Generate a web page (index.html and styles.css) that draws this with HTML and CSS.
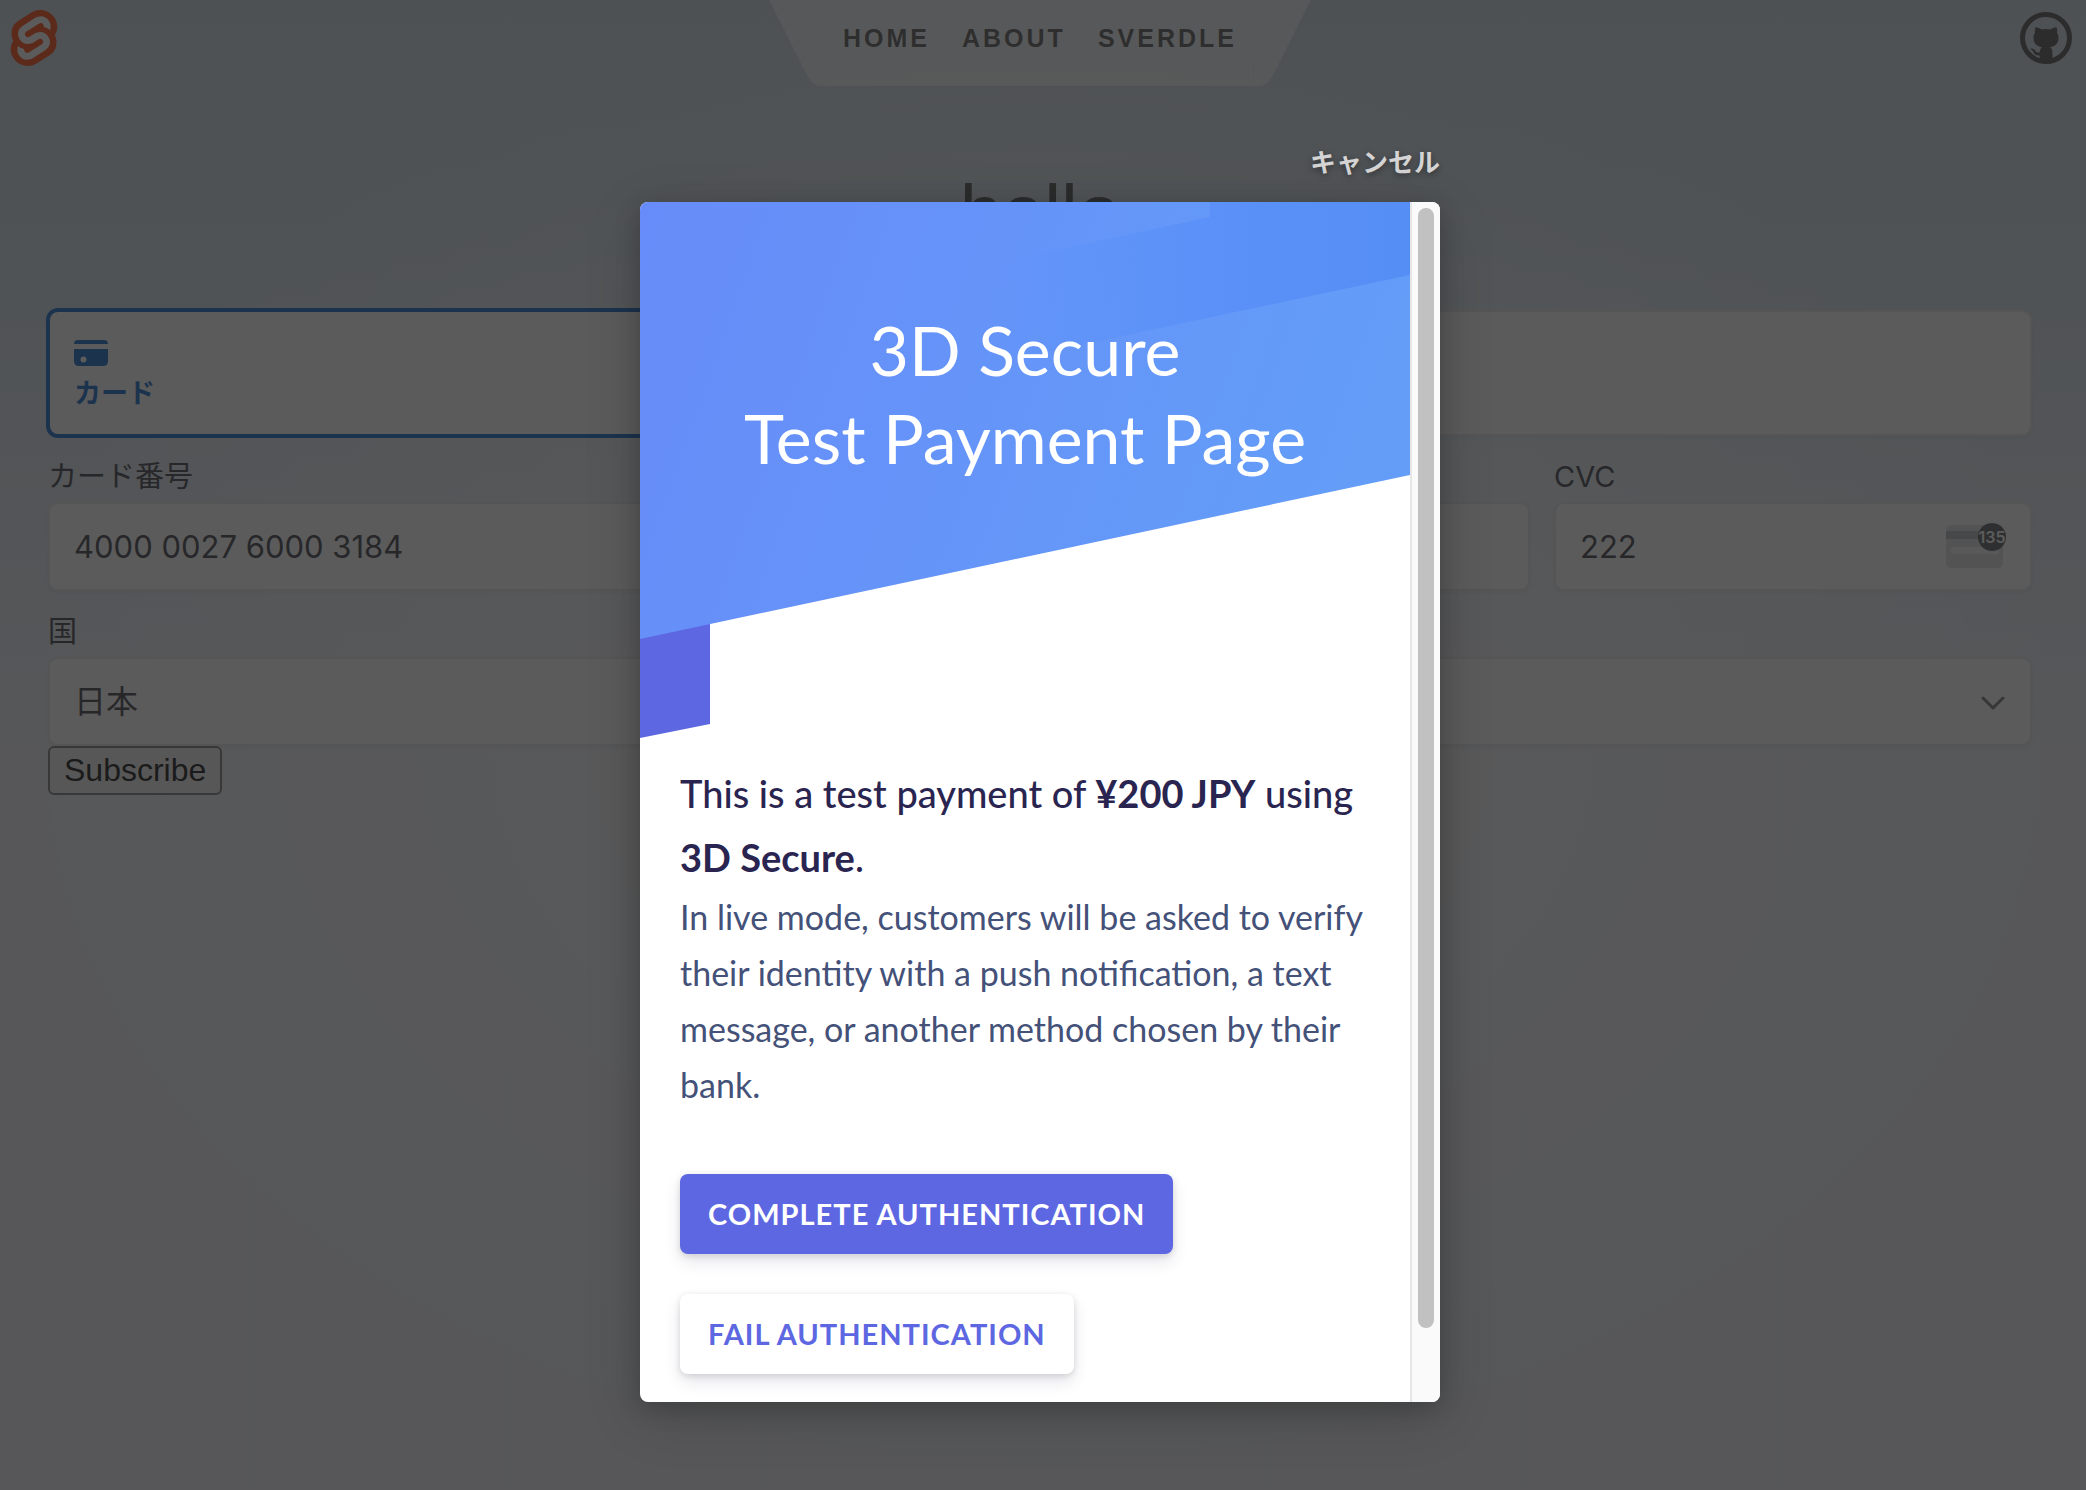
FILE: index.html
```html
<!DOCTYPE html>
<html lang="ja">
<head>
<meta charset="utf-8">
<meta name="viewport" content="width=device-width, initial-scale=1">
<title>hello</title>
<link rel="stylesheet" href="styles.css">
</head>
<body>
<div class="app">
  <header class="header">
    <a class="corner" href="#" aria-label="SvelteKit">
      <svg class="logo" viewBox="0 0 107 128" aria-hidden="true">
        <path fill="#ff3e00" d="M94.1566,22.8189c-10.4-14.8851-30.94-19.2971-45.7914-9.8348L22.2825,29.6078A29.9234,29.9234,0,0,0,8.7639,49.6506a31.5136,31.5136,0,0,0,3.1076,20.2318A30.0061,30.0061,0,0,0,7.3953,81.0653a31.8886,31.8886,0,0,0,5.4473,24.1157c10.4022,14.8865,30.9423,19.2966,45.7914,9.8348L84.7167,98.3921A29.9177,29.9177,0,0,0,98.2353,78.3493,31.5263,31.5263,0,0,0,95.13,58.117a30,30,0,0,0,4.4743-11.1824,31.88,31.88,0,0,0-5.4473-24.1157"/>
        <path fill="#fff" d="M45.8171,106.5815A20.7182,20.7182,0,0,1,23.58,98.3389a19.1739,19.1739,0,0,1-3.2766-14.5025,18.1886,18.1886,0,0,1,.6233-2.4357l.4912-1.4978,1.3363.9815a33.6443,33.6443,0,0,0,10.203,5.0978l.9694.2941-.0893.9675a5.8474,5.8474,0,0,0,1.052,3.8781,6.2389,6.2389,0,0,0,6.6952,2.485,5.7449,5.7449,0,0,0,1.6021-.7041L69.27,76.281a5.4306,5.4306,0,0,0,2.4506-3.631,5.7948,5.7948,0,0,0-.9875-4.3712,6.2436,6.2436,0,0,0-6.6978-2.4864,5.7427,5.7427,0,0,0-1.6.7036l-9.9532,6.3449a19.0329,19.0329,0,0,1-5.2965,2.3259,20.7181,20.7181,0,0,1-22.2368-8.2427,19.1725,19.1725,0,0,1-3.2766-14.5024,17.9885,17.9885,0,0,1,8.13-12.0513L55.8833,23.7472a19.0038,19.0038,0,0,1,5.3-2.3287A20.7182,20.7182,0,0,1,83.42,29.6611a19.1739,19.1739,0,0,1,3.2766,14.5025,18.4,18.4,0,0,1-.6233,2.4357l-.4912,1.4978-1.3356-.98a33.6175,33.6175,0,0,0-10.2037-5.1l-.9694-.2942.0893-.9675a5.8588,5.8588,0,0,0-1.052-3.878,6.2389,6.2389,0,0,0-6.6952-2.485,5.7449,5.7449,0,0,0-1.6021.7041L37.73,51.719a5.4218,5.4218,0,0,0-2.4487,3.63,5.7862,5.7862,0,0,0,.9856,4.3717,6.2437,6.2437,0,0,0,6.6978,2.4864,5.7652,5.7652,0,0,0,1.602-.7041l9.9519-6.3425a18.978,18.978,0,0,1,5.2959-2.3278,20.7181,20.7181,0,0,1,22.2368,8.2427,19.1725,19.1725,0,0,1,3.2766,14.5024,17.9977,17.9977,0,0,1-8.13,12.0532L51.1167,104.2528a19.0038,19.0038,0,0,1-5.3,2.3287"/>
      </svg>
    </a>
    <nav class="nav">
      <svg class="nav-edge" viewBox="0 0 2 3" aria-hidden="true"><path d="M0,0 L1,2 C1.5,3 1.5,3 2,3 L2,0 Z"/></svg>
      <ul class="nav-list">
        <li><a href="#">HOME</a></li>
        <li><a href="#">ABOUT</a></li>
        <li><a href="#">SVERDLE</a></li>
      </ul>
      <svg class="nav-edge" viewBox="0 0 2 3" aria-hidden="true"><path d="M0,0 L0,3 C0.5,3 0.5,3 1,2 L2,0 Z"/></svg>
    </nav>
    <a class="corner corner-right" href="#" aria-label="GitHub">
      <svg class="github" viewBox="0 0 52 52" aria-hidden="true">
        <circle cx="26" cy="26" r="23.5" fill="none" stroke="#444" stroke-width="5"/>
        <path fill="#444" d="M15.4 15.2c2.400 0 4.600 1.200 6.300 2.300 2.800-.7 5.800-.7 8.600 0 1.700-1.100 3.900-2.300 6.300-2.300.8 2 .7 4.100.3 5.400 1.100 1.500 1.600 3.200 1.600 5.200 0 6.200-3.700 8.700-8.300 9.500 1.500 1.200 2.200 2.900 2.200 5.200v8.500c-4.200 1.400-8.600 1.400-12.800 0v-5.600c-5 .6-5.700-2.500-6.700-4.100-.7-1.100-2-1.700-2.500-2.300 1-.9 3.200-.5 4.600 1.300 1.200 1.700 2.200 2.700 4.700 2.100.1-2.200.9-3.900 2.100-5.100-4.600-.8-8.300-3.300-8.300-9.500 0-2 .5-3.700 1.600-5.200-.4-1.300-.5-3.400.3-5.400z"/>
      </svg>
    </a>
  </header>

  <main class="main">
    <h1 class="title">hello</h1>
    <form class="payment">
      <div class="tabs">
        <button class="tab tab-selected" type="button">
          <svg class="tab-icon" viewBox="0 0 34 26" aria-hidden="true">
            <path d="M4 0h26a4 4 0 0 1 4 4H0a4 4 0 0 1 4-4z"/>
            <path fill-rule="evenodd" d="M0 9h34v12.500a4.500 4.500 0 0 1-4.500 4.500h-25A4.500 4.500 0 0 1 0 21.500zM9.500 16.500a3 3 0 1 0 0 6 3 3 0 0 0 0-6z"/>
          </svg>
          <span>カード</span>
        </button>
        <button class="tab" type="button" aria-label="その他"></button>
      </div>
      <div class="fields">
        <div class="field field-wide">
          <label for="number">カード番号</label>
          <input id="number" type="text" value="4000 0027 6000 3184">
        </div>
        <div class="field">
          <input id="expiry" type="text" aria-label="有効期限">
        </div>
        <div class="field">
          <label for="cvc">CVC</label>
          <div class="control">
            <input id="cvc" type="text" value="222">
            <svg class="cvc-icon" viewBox="0 0 60 45" aria-hidden="true">
              <rect x="0" y="2" width="57" height="43" rx="5" fill="#dfe0e1"/>
              <rect x="0" y="8" width="57" height="8" fill="#b0b4b8"/>
              <rect x="5" y="24" width="48" height="7" rx="2" fill="#f8f8f8"/>
              <circle cx="46" cy="14" r="14" fill="#4c5056"/>
              <text x="46" y="20" text-anchor="middle">135</text>
            </svg>
          </div>
        </div>
        <div class="field field-full">
          <label for="country">国</label>
          <div class="control">
            <select id="country"><option>日本</option></select>
            <svg class="chevron" viewBox="0 0 24 14" aria-hidden="true"><path d="M2 2l10 10L22 2"/></svg>
          </div>
        </div>
      </div>
      <button class="subscribe" type="submit">Subscribe</button>
    </form>
  </main>
</div>

<div class="overlay">
  <div class="challenge">
    <button class="cancel" type="button">キャンセル</button>
    <div class="modal" role="dialog" aria-modal="true" aria-labelledby="modal-title">
      <div class="page">
        <div class="hero">
          <svg class="hero-art" viewBox="0 0 770 536" preserveAspectRatio="none" aria-hidden="true">
            <defs>
              <linearGradient id="sky" x1="0" y1="0" x2="1" y2="0.2">
                <stop offset="0" stop-color="#678cf9"/>
                <stop offset="0.5" stop-color="#6594f8"/>
                <stop offset="1" stop-color="#639df8"/>
              </linearGradient>
              <linearGradient id="band" x1="0" y1="0" x2="1" y2="0">
                <stop offset="0" stop-color="#5b91f8" stop-opacity="0"/>
                <stop offset="0.5" stop-color="#5b91f8"/>
                <stop offset="1" stop-color="#558ef5"/>
              </linearGradient>
            </defs>
            <path fill="#5d67e1" d="M0 400H70V522L0 536z"/>
            <path fill="url(#sky)" d="M0 0H770V273L0 437z"/>
            <path fill="url(#band)" d="M570 0H770V73L350 162V62L570 15z"/>
          </svg>
          <h2 class="hero-title" id="modal-title">3D Secure<br>Test Payment Page</h2>
        </div>
        <div class="content">
          <p class="lead">This is a test payment of <strong>¥200 JPY</strong> using <strong>3D Secure</strong>.</p>
          <p class="note">In live mode, customers will be asked to verify their identity with a push notification, a text message, or another method chosen by their bank.</p>
          <div class="actions">
            <button class="action action-primary" type="button">COMPLETE AUTHENTICATION</button>
            <button class="action" type="button">FAIL AUTHENTICATION</button>
          </div>
        </div>
      </div>
      <div class="scrollbar" aria-hidden="true"><div class="thumb"></div></div>
    </div>
  </div>
</div>
</body>
</html>
```
FILE: styles.css
```css
* { box-sizing: border-box; }

body {
  margin: 0;
  min-height: 100vh;
  position: relative;
  font-family: "Liberation Sans", "Noto Sans CJK JP", sans-serif;
  color: rgba(0, 0, 0, 0.7);
  background-attachment: fixed;
  background-color: hsl(209, 36%, 86%);
  background-size: 100vw 100vh;
  background-image:
    radial-gradient(50% 50% at 50% 50%, rgba(255, 255, 255, 0.75) 0%, rgba(255, 255, 255, 0) 100%),
    linear-gradient(180deg, rgb(202, 216, 228) 0%, hsl(209, 36%, 86%) 15%, hsl(224, 44%, 95%) 50%);
}

button, input, select { font: inherit; color: inherit; margin: 0; }

.app { padding-right: 6px; }

.header {
  display: flex;
  justify-content: space-between;
}

.corner {
  display: flex;
  align-items: flex-start;
  width: 86px;
  padding: 6px 7px;
}
.corner-right {
  justify-content: flex-end;
  padding: 12px 8px;
}
.logo { width: 54px; height: 64px; }
.github { width: 52px; height: 52px; }

.nav { display: flex; }
.nav-edge {
  display: block;
  width: 58px;
  height: 86px;
  fill: rgba(255, 255, 255, 0.7);
}
.nav-list {
  display: flex;
  margin: 0;
  padding: 0 0 10px;
  list-style: none;
  background: rgba(255, 255, 255, 0.7);
}
.nav-list a {
  display: block;
  padding: 0 16px;
  font-size: 25px;
  font-weight: 700;
  line-height: 76px;
  letter-spacing: 3px;
  color: rgba(0, 0, 0, 0.7);
  text-decoration: none;
}

.main { padding: 82px 48px 48px; }

.title {
  margin: 0 0 54px;
  font-size: 76px;
  font-weight: 400;
  line-height: 88px;
  text-align: center;
}

.tabs {
  display: grid;
  grid-template-columns: 1fr 1fr;
  gap: 24px;
  margin-bottom: 22px;
}
.tab {
  display: flex;
  flex-direction: column;
  align-items: flex-start;
  gap: 10px;
  min-height: 126px;
  padding: 28px 24px 22px;
  border: 2px solid #e6e6e6;
  border-radius: 10px;
  background: #fff;
  box-shadow: 0 2px 4px rgba(0, 0, 0, 0.05);
  font-size: 27px;
  font-weight: 700;
  line-height: 36px;
}
.tab-selected {
  border-color: #0560c8;
  box-shadow: 0 0 0 2px #0560c8;
  color: #0560c8;
}
.tab-icon { width: 34px; height: 26px; fill: currentColor; }

.fields {
  display: grid;
  grid-template-columns: repeat(4, 1fr);
  align-items: end;
  gap: 22px 24px;
  font-family: Inter, "Noto Sans CJK JP", sans-serif;
  color: #30313d;
}
.field-wide { grid-column: span 2; }
.field-full { grid-column: 1 / -1; }
.field label {
  display: block;
  margin-bottom: 6px;
  font-size: 29px;
  line-height: 38px;
}
.field input, .field select {
  display: block;
  width: 100%;
  height: 89px;
  padding: 0 24px;
  border: 2px solid #e6e6e6;
  border-radius: 10px;
  background: #fff;
  box-shadow: 0 2px 4px rgba(0, 0, 0, 0.05);
  font-size: 31px;
  appearance: none;
}
.field select { font-size: 32px; }
.control { position: relative; }
.cvc-icon {
  position: absolute;
  top: 21px;
  right: 26px;
  width: 60px;
  height: 45px;
}
.cvc-icon text {
  font-family: Inter, sans-serif;
  font-size: 16px;
  font-weight: 600;
  fill: #fff;
}
.chevron {
  position: absolute;
  top: 39px;
  right: 27px;
  width: 24px;
  height: 14px;
  fill: none;
  stroke: #6d6e78;
  stroke-width: 3;
  stroke-linecap: round;
  stroke-linejoin: round;
}

.subscribe {
  display: block;
  padding: 0 14px;
  border: 2px solid #767676;
  border-radius: 6px;
  background: #efefef;
  font-size: 32px;
  line-height: 45px;
  color: #000;
}

.overlay {
  position: absolute;
  inset: 0;
  display: flex;
  justify-content: center;
  align-items: flex-start;
  padding: 146px 6px 0 0;
  background: rgba(36, 36, 36, 0.75);
}
.challenge {
  display: flex;
  flex-direction: column;
  align-items: flex-end;
  width: 100%;
  max-width: 800px;
}
.cancel {
  margin-bottom: 22px;
  padding: 0;
  border: 0;
  background: none;
  font-size: 26px;
  font-weight: 700;
  line-height: 34px;
  color: #d4d4d4;
  text-shadow: 0 2px 6px rgba(0, 0, 0, 0.4);
}

.modal {
  display: flex;
  width: 100%;
  border-radius: 8px;
  overflow: hidden;
  background: #fff;
  box-shadow: 0 14px 60px rgba(0, 0, 0, 0.14), 0 6px 24px rgba(0, 0, 0, 0.2);
  font-family: Lato, "Noto Sans", sans-serif;
}
.page { flex: 1; min-width: 0; }

.scrollbar {
  display: flex;
  width: 30px;
  padding: 6px 6px 74px;
  border-left: 2px solid #e6e6e6;
  background: #fafafa;
}
.thumb {
  width: 16px;
  border-radius: 8px;
  background: #c1c1c1;
}

.hero {
  position: relative;
  min-height: 536px;
  padding-top: 104px;
}
.hero-art {
  position: absolute;
  inset: 0;
  width: 100%;
  height: 100%;
}
.hero-title {
  position: relative;
  margin: 0;
  font-size: 68px;
  font-weight: 400;
  line-height: 88px;
  text-align: center;
  color: #fff;
}

.content { padding: 23px 40px 28px; }
.lead {
  margin: 0;
  font-size: 38px;
  font-weight: 500;
  line-height: 64px;
  color: #2a2550;
}
.lead strong { font-weight: 700; }
.note {
  margin: 0;
  font-size: 34px;
  line-height: 56px;
  color: #445178;
}
.actions {
  display: flex;
  flex-direction: column;
  align-items: flex-start;
  gap: 40px;
  margin-top: 61px;
}
.action {
  padding: 0 28px;
  border: 0;
  border-radius: 8px;
  background: #fff;
  box-shadow: 0 8px 16px rgba(50, 50, 93, 0.12), 0 2px 6px rgba(0, 0, 0, 0.12);
  font-size: 29px;
  font-weight: 700;
  line-height: 80px;
  letter-spacing: 1px;
  color: #5d67e1;
}
.action-primary { background: #5d67e1; color: #fff; }
```
